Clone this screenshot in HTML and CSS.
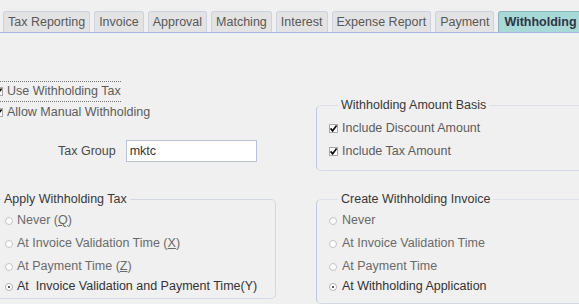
FILE: index.html
```html
<!DOCTYPE html>
<html>
<head>
<meta charset="utf-8">
<link rel="stylesheet" href="styles.css">
</head>
<body>
<div class="tabs">
  <div class="tab">Tax Reporting</div>
  <div class="tab">Invoice</div>
  <div class="tab">Approval</div>
  <div class="tab">Matching</div>
  <div class="tab">Interest</div>
  <div class="tab">Expense Report</div>
  <div class="tab">Payment</div>
  <div class="tab active">Withholding Tax</div>
</div>
<div class="main">
  <div class="col left">
    <label class="check focus"><span class="cb"><svg viewBox="0 0 9 9" width="9" height="9"><path d="M1.6 4.4 L3.6 6.8 L7.6 1.6" stroke="#111" stroke-width="1.7" fill="none"/></svg></span><span>Use Withholding Tax</span></label>
    <label class="check"><span class="cb"><svg viewBox="0 0 9 9" width="9" height="9"><path d="M1.6 4.4 L3.6 6.8 L7.6 1.6" stroke="#111" stroke-width="1.7" fill="none"/></svg></span><span>Allow Manual Withholding</span></label>
    <div class="field">
      <span class="field-label">Tax Group</span>
      <span class="input">mktc</span>
    </div>
    <fieldset class="group group-apply">
      <legend>Apply Withholding Tax</legend>
      <div class="radio"><span class="rb"></span><span>Never (<u>Q</u>)</span></div>
      <div class="radio"><span class="rb"></span><span>At Invoice Validation Time (<u>X</u>)</span></div>
      <div class="radio"><span class="rb"></span><span>At Payment Time (<u>Z</u>)</span></div>
      <div class="radio on tight"><span class="rb"></span><span>At&nbsp; Invoice Validation and Payment Time(Y)</span></div>
    </fieldset>
  </div>
  <div class="col right">
    <fieldset class="group group-basis">
      <legend>Withholding Amount Basis</legend>
      <label class="check"><span class="cb"><svg viewBox="0 0 9 9" width="9" height="9"><path d="M1.6 4.4 L3.6 6.8 L7.6 1.6" stroke="#111" stroke-width="1.7" fill="none"/></svg></span><span>Include Discount Amount</span></label>
      <label class="check"><span class="cb"><svg viewBox="0 0 9 9" width="9" height="9"><path d="M1.6 4.4 L3.6 6.8 L7.6 1.6" stroke="#111" stroke-width="1.7" fill="none"/></svg></span><span>Include Tax Amount</span></label>
    </fieldset>
    <fieldset class="group group-create">
      <legend>Create Withholding Invoice</legend>
      <div class="radio"><span class="rb"></span><span>Never</span></div>
      <div class="radio"><span class="rb"></span><span>At Invoice Validation Time</span></div>
      <div class="radio"><span class="rb"></span><span>At Payment Time</span></div>
      <div class="radio on tight"><span class="rb"></span><span>At Withholding Application</span></div>
    </fieldset>
  </div>
</div>
</body>
</html>
```
FILE: styles.css
```css
html, body {
  margin: 0;
  width: 579px;
  height: 304px;
  overflow: hidden;
}
body {
  background: #f0f0f0;
  font-family: "Liberation Sans", Arial, sans-serif;
  font-size: 12.5px;
  color: #5c5c5c;
}
.tabs {
  display: flex;
  gap: 4px;
  height: 21px;
  padding: 11px 0 0 3px;
  border-bottom: 1px solid #a9b3e6;
  white-space: nowrap;
}
.tab {
  flex: none;
  height: 20px;
  line-height: 20px;
  padding: 0 4px;
  border: 1px solid #ccd2e2;
  border-bottom: none;
  border-radius: 3px 3px 0 0;
  background: #e3e3e3;
  color: #585858;
}
.tab.active {
  background: #a7d9d6;
  border-color: #86b8c0;
  color: #2e3646;
  font-weight: bold;
  padding-left: 5px;
}
.main {
  display: flex;
  align-items: flex-start;
}
.col {
  flex: none;
  display: flex;
  flex-direction: column;
  align-items: flex-start;
}
.left {
  width: 279px;
  margin-left: -2px;
  padding-top: 48px;
}
.right {
  margin-left: 39px;
  padding-top: 65px;
  width: 320px;
}
.check {
  display: flex;
  align-items: center;
  gap: 4px;
  height: 19px;
  line-height: 19px;
  border-top: 1px dotted transparent;
  border-bottom: 1px dotted transparent;
}
.left .check {
  margin-left: -4px;
}
.check.focus {
  border-color: #777;
}
.cb {
  flex: none;
  width: 9px;
  height: 9px;
  background: #fff;
  box-shadow: inset 0 0 0 1px #a8a8a8;
  display: flex;
}
.cb svg {
  display: block;
}
.field {
  display: flex;
  align-items: center;
  margin-top: 17px;
  padding-left: 60px;
  gap: 10px;
}
.field-label {
  color: #4a4a4a;
}
.input {
  width: 126px;
  height: 20px;
  line-height: 20px;
  padding-left: 3px;
  background: #fff;
  border: 1px solid #b7c3da;
  color: #333;
}
.group {
  margin: 0;
  padding: 0;
  border: 1px solid #d2d8e6;
  border-radius: 5px;
  min-width: 0;
}
.group legend {
  padding: 0 3px;
  line-height: 14px;
  color: #383838;
}
.group-apply {
  width: 278px;
  box-sizing: border-box;
  margin-top: 30px;
  border-left: none;
  border-radius: 0 5px 5px 0;
  padding-top: 3px;
}
.group-apply legend {
  margin-left: 3px;
}
.group-basis,
.group-create {
  width: 300px;
  box-sizing: border-box;
  border-left-color: #b9c9e6;
}
.group-basis legend,
.group-create legend {
  margin-left: 9px;
}
.group-basis {
  padding: 5px 0 7px 12px;
  border-top-color: #dde2ea;
}
.group-basis .check {
  height: 21px;
  line-height: 21px;
}
.group-create {
  margin-top: 21px;
  padding: 3px 0 5px 12px;
  border-top-color: #dde2ea;
}
.radio {
  display: flex;
  align-items: center;
  gap: 5px;
  height: 23px;
  line-height: 23px;
  color: #6a6a6a;
}
.group-apply .radio {
  padding-left: 7px;
  gap: 4px;
}
.radio.tight {
  margin-top: -3px;
}
.radio.on {
  color: #333;
}
.radio u {
  text-decoration-thickness: 1px;
}
.rb {
  flex: none;
  width: 6px;
  height: 6px;
  border: 1px solid #c4c4c4;
  border-radius: 50%;
  background: #fff;
  position: relative;
}
.radio.on .rb {
  border-color: #b0b0b0;
}
.radio.on .rb::after {
  content: "";
  position: absolute;
  left: 2px;
  top: 2px;
  width: 2px;
  height: 2px;
  border-radius: 50%;
  background: #222;
}
```
